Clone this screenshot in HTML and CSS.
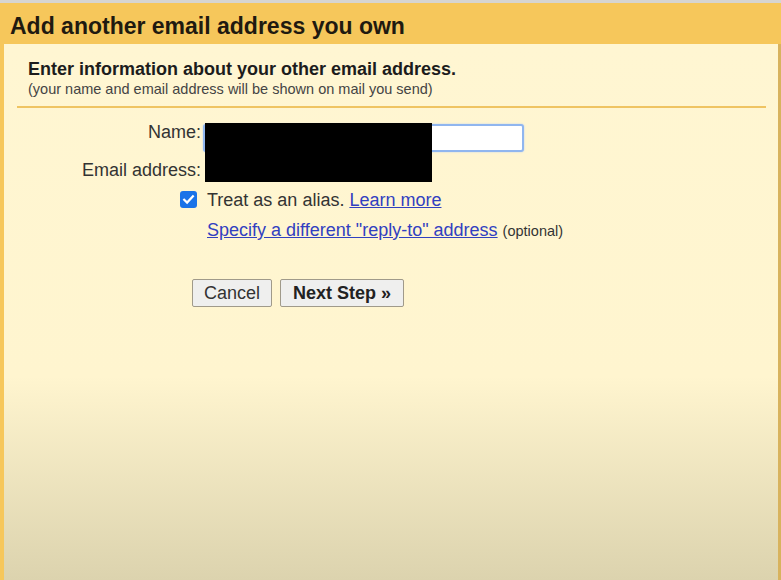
FILE: index.html
```html
<!DOCTYPE html>
<html>
<head>
<meta charset="utf-8">
<link rel="stylesheet" href="styles.css">
</head>
<body>
<div class="topstrip"></div>
<div class="dialog">
  <div class="header">Add another email address you own</div>
  <div class="panel">
    <div class="intro">
      <div class="intro-title">Enter information about your other email address.</div>
      <div class="intro-sub">(your name and email address will be shown on mail you send)</div>
    </div>
    <div class="sep"></div>
    <div class="form">
      <div class="redact"></div>
      <div class="row row-name">
        <div class="label">Name:</div>
        <div class="field"><div class="input"></div></div>
      </div>
      <div class="row row-email">
        <div class="label">Email address:</div>
        <div class="field"></div>
      </div>
      <div class="row row-check">
        <div class="label"><span class="checkbox"><svg width="13" height="13" viewBox="0 0 13 13"><path d="M2.2 6.8 L5.1 9.6 L10.9 3.4" fill="none" stroke="#fff" stroke-width="2.2" stroke-linecap="square"/></svg></span></div>
        <div class="field text">Treat as an alias. <a class="link">Learn more</a></div>
      </div>
      <div class="row row-reply">
        <div class="label"></div>
        <div class="field text"><a class="link">Specify a different "reply-to" address</a> <span class="optional">(optional)</span></div>
      </div>
      <div class="buttons">
        <button class="btn">Cancel</button>
        <button class="btn btn-primary">Next Step »</button>
      </div>
    </div>
  </div>
</div>
</body>
</html>
```
FILE: styles.css
```css
html, body {
  margin: 0;
  padding: 0;
  height: 580px;
  overflow: hidden;
}
body {
  font-family: "Liberation Sans", Arial, sans-serif;
  color: #222;
  background: #f6c75b;
}
.topstrip {
  height: 3px;
  background: #d6d5d2;
}
.dialog {
  height: 577px;
  display: flex;
  flex-direction: column;
}
.header {
  height: 35px;
  padding: 6px 0 0 10px;
  line-height: 34px;
  font-size: 23px;
  font-weight: bold;
  color: #1f1a10;
  background: #f6c75b;
}
.panel {
  flex: 1;
  margin-left: 4px;
  border-right: 3px solid #d8b35e;
  background: linear-gradient(to bottom, #fff6d2 0%, #fff5cf 62%, #dcd3ae 100%);
  padding-top: 14px;
}
.intro {
  padding-left: 24px;
}
.intro-title {
  font-size: 18px;
  font-weight: bold;
  line-height: 22px;
  color: #1c1c1c;
}
.intro-sub {
  font-size: 14.5px;
  line-height: 18px;
  color: #444;
}
.sep {
  height: 2px;
  background: #efc462;
  margin: 8px 12px 0 13px;
}
.form {
  position: relative;
  padding-top: 16px;
}
.redact {
  position: absolute;
  left: 201px;
  top: 15px;
  width: 227px;
  height: 59px;
  background: #000;
  z-index: 2;
}
.row {
  display: flex;
}
.label {
  width: 197px;
  text-align: right;
  font-size: 18px;
  line-height: 20px;
  color: #333;
  display: flex;
  justify-content: flex-end;
}
.field {
  margin-left: 2px;
}
.field.text {
  padding-left: 4px;
  font-size: 18px;
  line-height: 20px;
  color: #333;
}
.row-name {
  height: 28px;
}
.row-name .label {
  margin-top: -2px;
}
.input {
  width: 317px;
  height: 24px;
  border: 2px solid #90b6ef;
  border-radius: 3px;
  background: #fff;
  box-shadow: 0 0 2px #b8d0f5;
}
.row-email {
  height: 30px;
}
.row-email .label {
  padding-top: 8px;
}
.row-check {
  margin-top: 8px;
}
.checkbox {
  width: 17px;
  height: 17px;
  margin-top: 1px;
  margin-right: 4px;
  border-radius: 3px;
  background: #1a73e8;
  display: flex;
  align-items: center;
  justify-content: center;
}
.row-reply {
  margin-top: 10px;
}
.link {
  color: #3140c0;
  text-decoration: underline;
}
.optional {
  font-size: 14.5px;
  color: #333;
}
.buttons {
  display: flex;
  gap: 8px;
  padding-left: 188px;
  margin-top: 38px;
}
.btn {
  height: 28px;
  padding: 0 11px;
  font-family: "Liberation Sans", Arial, sans-serif;
  font-size: 18px;
  color: #333;
  background: #efefee;
  border: 1px solid #a09a8a;
  border-radius: 2px;
  line-height: 25px;
}
.btn-primary {
  font-weight: bold;
  color: #222;
  padding: 0 12px;
}
```
